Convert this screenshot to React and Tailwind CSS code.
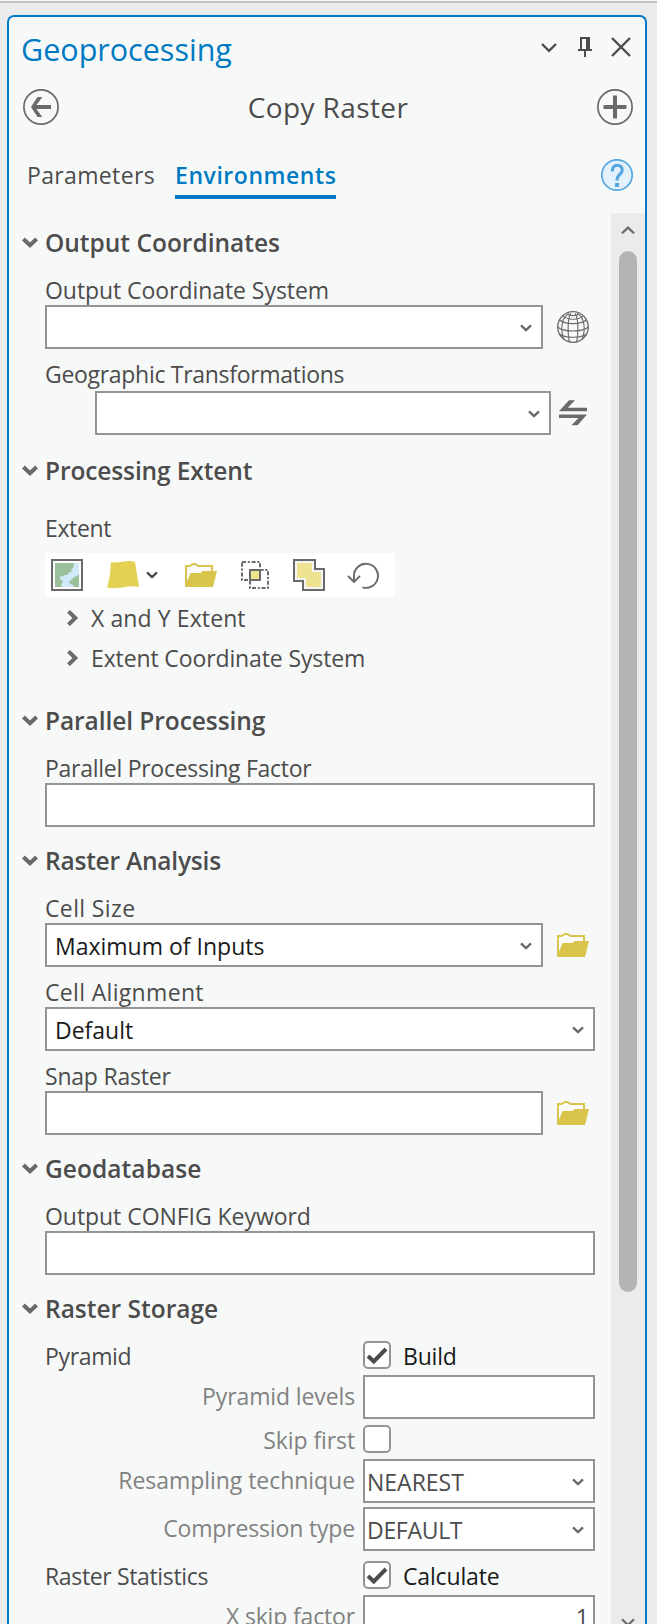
const ChevronDown = ({ className }) => (
  <svg className={className} viewBox="0 0 12 8" fill="none" stroke="currentColor" strokeWidth="2.4">
    <path d="M1 1.4 6 6.2 11 1.4" />
  </svg>
);

const FolderIcon = ({ className = "" }) => (
  <svg className={`w-8 h-8 shrink-0 ${className}`} viewBox="0 0 32 32">
    <path d="M1 27V7h3c2 0 2-2 5-2s3 2 5 2h13v6" fill="#fbfbfb" stroke="#d9c44c" strokeWidth="2" />
    <path d="M0 28 1.8 23 5.500 14H15c1.500 0 1.500-2 3.500-2H32l-4 16z" fill="#d9c44c" />
  </svg>
);

const GlobeIcon = () => (
  <svg className="w-8 h-8 shrink-0" viewBox="0 0 32 32" fill="none" stroke="#6a6a6a" strokeWidth="1.1">
    <circle cx="16" cy="16" r="15.3" strokeWidth="1.3" />
    <path d="M14 2.500C10.500 6 10.500 23 12.500 31M18 2.500C21.500 6 21.500 23 19.500 31M12 2.500C3.500 7 3.500 20 7 28.500M20 2.500C28.500 7 28.500 20 25 28.500" />
    <path d="M10 3c2.500 2.200 9.500 2.200 12 0M6 5c4 4.300 16 4.300 20 0M2.800 9c5 4.800 21.400 4.800 26.400 0M.8 16c5 5.300 25.400 5.300 30.400 0M2.500 23c5 4.300 22 4.300 27 0" />
  </svg>
);

const SwapIcon = () => (
  <svg className="w-7 h-7 shrink-0" viewBox="0 0 28 28" fill="#6a6a6a">
    <path d="M0 12.300 10 1.300h6L8.800 8.800H28v3.500zM0 15.600h28L18.500 26.300h-6L19.400 19H0z" />
  </svg>
);

const MapIcon = () => (
  <svg className="w-8 h-8" viewBox="0 0 32 32">
    <path d="M1 1h30v30H1z" fill="#fbfbfb" stroke="#6a6a6a" strokeWidth="2" />
    <path d="M4 4h24v24H4z" fill="#d2e9f9" />
    <path
      d="M4 4h19l-.5 4.500-2 1.500v3l-3 .5-1 2.500H13l-1 1.500-3-.5v3.500l2.500.5v2.500L10 25.500l1 2.500H4zM28 15l-2 2-3 1-2.500 3-2.500 1.500 1 2.500 3.500 1v2H28z"
      fill="#9bc19c"
    />
  </svg>
);

const PolygonIcon = () => (
  <svg className="w-8 h-8 ml-6" viewBox="0 0 32 32">
    <path d="M4 3c6 2 16-2.500 24-.3L32 28c-9-3-20 3-32 .5C3 20 3.500 10 4 3z" fill="#e4d153" />
  </svg>
);

const IntersectIcon = () => (
  <svg className="w-8 h-8 ml-5.5" viewBox="0 0 32 32" fill="none" stroke="#6a6a6a" strokeWidth="2">
    <path d="M3 3h18v18H3z" strokeDasharray="4 1.8 2 1.8" />
    <path d="M11 11h18v18H11z" strokeDasharray="4 1.8 2 1.8" />
    <path d="M11 11h10v10H11z" fill="#efe291" />
  </svg>
);

const UnionIcon = () => (
  <svg className="w-8 h-8 ml-5.5" viewBox="0 0 32 32">
    <path d="M1 1h21v9h9v21H10v-9H1z" fill="#f4f4f4" stroke="#6a6a6a" strokeWidth="2" />
    <path d="M4 4h15v9h9v15H13v-9H4z" fill="#efe291" />
  </svg>
);

const UndoIcon = () => (
  <svg className="w-8 h-8 ml-5.5" viewBox="0 0 32 32" fill="none" stroke="#6a6a6a" strokeWidth="1.9">
    <path d="M7 22.500V17A12 12 0 1 1 15.500 28.300" />
    <path d="M1 17 7 23 13 17" />
  </svg>
);

const Section = ({ title, className = "" }) => (
  <h2 className={`flex items-center h-8 text-[24.5px] font-semibold ${className}`}>
    <svg className="w-4 h-3 mr-[7px] ml-[-23px]" viewBox="0 0 16 12" fill="none" stroke="#6a6a6a" strokeWidth="4">
      <path d="M1.400 2 8 8.300 14.600 2" />
    </svg>
    {title}
  </h2>
);

const Label = ({ children, className = "" }) => (
  <div className={`h-8 leading-[35px] ${className}`}>{children}</div>
);

const Box = ({ value, select, className = "" }) => (
  <div className={`flex items-center justify-between h-11 shrink-0 border-2 border-[#949494] bg-white pr-[9px] ${className}`}>
    <span className="h-8 leading-[34px]">{value}</span>
    {select && <ChevronDown className="w-3 h-2 mt-0.5 text-[#6a6a6a]" />}
  </div>
);

const SubGroup = ({ label, className }) => (
  <div className="flex items-center h-8">
    <svg className="w-3 h-4 ml-[22px] mr-3" viewBox="0 0 12 16" fill="none" stroke="#6a6a6a" strokeWidth="4">
      <path d="M1.500 1.400 8.300 8 1.500 14.600" />
    </svg>
    <span className={`leading-8 ${className}`}>{label}</span>
  </div>
);

const Checkbox = ({ checked }) => (
  <div className="w-7 h-7 shrink-0 border-2 border-[#949494] rounded-[5px] bg-white">
    {checked && (
      <svg className="w-6 h-6" viewBox="0 0 24 24" fill="none" stroke="#4c4c4c" strokeWidth="4">
        <path d="M3 13 8.800 18.500 21 6" />
      </svg>
    )}
  </div>
);

const SubLabel = ({ children, className = "" }) => (
  <span className={`w-[310px] h-8 mr-2 text-right text-[#828282] leading-[30px] ${className}`}>{children}</span>
);

const Header = () => (
  <>
    <div className="flex items-center justify-between h-10 mt-3 pl-3 pr-3.5">
      <h1 className="text-[30.5px] leading-[41px] text-[#007ac2]">Geoprocessing</h1>
      <div className="flex items-center mb-1 text-[#4c4c4c]">
        <svg className="w-4 h-3" viewBox="0 0 16 12" fill="none" stroke="currentColor" strokeWidth="2.4">
          <path d="M1 3 8 9.800 15 3" />
        </svg>
        <svg className="w-3.5 h-5 ml-[21px]" viewBox="0 0 14 20" fill="currentColor">
          <path d="M2 0h10v12h2v2H8v6H6v-6H0v-2h2zM4 2v10h4V2z" fillRule="evenodd" />
        </svg>
        <svg className="w-5 h-5 ml-[19px]" viewBox="0 0 20 20" fill="none" stroke="currentColor" strokeWidth="2.4">
          <path d="M1 1 19 19M19 1 1 19" />
        </svg>
      </div>
    </div>

    <div className="flex items-center justify-between h-10 mt-[18px] pl-3.5 pr-3">
      <svg className="w-9 h-9" viewBox="0 0 36 36" fill="none" stroke="#6a6a6a">
        <circle cx="18" cy="18" r="17.1" strokeWidth="1.7" />
        <path d="M10 18h18" strokeWidth="4" />
        <path d="M14.500 8h4.800l-7.300 10 7.300 10h-4.800L8 18z" fill="#6a6a6a" stroke="none" />
      </svg>
      <span className="leading-10 text-[28px] tracking-[0.4px]">Copy Raster</span>
      <svg className="w-9 h-9" viewBox="0 0 36 36" fill="none" stroke="#6a6a6a">
        <circle cx="18" cy="18" r="17.1" strokeWidth="1.7" />
        <path d="M6.500 18h23M18 6.500v23" strokeWidth="4" />
      </svg>
    </div>

    <div className="flex h-10 mt-8 pl-[18px] pr-3">
      <span className="w-[148px] leading-8 tracking-[0.35px]">Parameters</span>
      <span className="w-[161px] leading-8 font-semibold tracking-[0.55px] text-[#007ac2] border-b-4 border-[#007ac2]">
        Environments
      </span>
      <svg className="w-8 h-8 ml-auto" viewBox="0 0 32 32" fill="none" stroke="#53a5de">
        <circle cx="16" cy="16" r="15.2" fill="#e3f1fc" strokeWidth="1.7" />
        <path d="M11.300 12.500C11 4 21.500 5 21.300 11c-.1 4.500-5.300 4-5.300 10.500" strokeWidth="3" />
        <path d="M14 24h4v4h-4z" fill="#53a5de" stroke="none" />
      </svg>
    </div>
  </>
);

const ScrollBar = () => (
  <div className="flex flex-col items-center w-[34px] shrink-0 bg-[#ebebeb]">
    <svg className="w-3.5 h-2 mt-[13px] shrink-0" viewBox="0 0 14 8" fill="none" stroke="#6a6a6a" strokeWidth="2.2">
      <path d="M1 7.300 7 1.600 13 7.300" />
    </svg>
    <div className="w-[18px] h-[1041px] mt-[17px] shrink-0 rounded-full bg-[#b4b4b4]" />
    <svg className="w-3.5 h-2 mt-[326px] shrink-0" viewBox="0 0 14 8" fill="none" stroke="#6a6a6a" strokeWidth="2.2">
      <path d="M1 1.300 7 7 13 1.300" />
    </svg>
  </div>
);

export default function App() {
  return (
    <div className="flex flex-col w-[657px] h-[1624px] overflow-hidden bg-[#ebebeb] font-['Open_Sans',sans-serif] text-[23px] text-[#4c4c4c] whitespace-nowrap">
      <div className="h-[3px] shrink-0 border-t border-[#f7f9f8] bg-[#c0c4c8]" />
      <div className="flex flex-col w-[640px] h-[1620px] shrink-0 mt-3 ml-[7px] border-2 border-b-0 border-[#007ac2] rounded-t-[7px] bg-[#f7f9f8]">
        <Header />

        <div className="flex justify-between h-[1411px] mt-3.5">
          <div className="w-[550px] ml-9 pt-3.5">
            <Section title="Output Coordinates" />
            <Label className="mt-3.5 tracking-[-0.06px]">Output Coordinate System</Label>
            <div className="flex items-center">
              <Box select className="w-[498px] mr-3.5" />
              <GlobeIcon />
            </div>
            <Label className="mt-2 mb-0.5 tracking-[-0.3px]">Geographic Transformations</Label>
            <div className="flex items-center">
              <Box select className="w-[456px] ml-[50px] mr-2" />
              <SwapIcon />
            </div>

            <Section title="Processing Extent" className="mt-5 tracking-[-0.12px]" />
            <Label className="mt-6 mb-2.5 tracking-[-0.35px]">Extent</Label>
            <div className="flex items-center w-[350px] h-11 pl-1.5 bg-white">
              <MapIcon />
              <PolygonIcon />
              <ChevronDown className="w-3 h-2 ml-[7px]" />
              <FolderIcon className="ml-[27px]" />
              <IntersectIcon />
              <UnionIcon />
              <UndoIcon />
            </div>
            <div className="flex flex-col gap-2 mt-[5px]">
              <SubGroup label="X and Y Extent" className="tracking-[0.1px]" />
              <SubGroup label="Extent Coordinate System" className="tracking-[-0.12px]" />
            </div>

            <Section title="Parallel Processing" className="mt-[31px] tracking-[-0.08px]" />
            <Label className="mt-3.5 tracking-[-0.27px]">Parallel Processing Factor</Label>
            <Box />

            <Section title="Raster Analysis" className="mt-[18px] tracking-[-0.22px]" />
            <Label className="mt-3.5 tracking-[0.37px]">Cell Size</Label>
            <div className="flex items-center">
              <Box select value="Maximum of Inputs" className="w-[498px] mr-3.5 pl-2 text-[#1a1a1a]" />
              <FolderIcon />
            </div>
            <Label className="mt-2 tracking-[0.33px]">Cell Alignment</Label>
            <Box select value="Default" className="pl-2 text-[#1a1a1a]" />
            <Label className="mt-2 tracking-[-0.22px]">Snap Raster</Label>
            <div className="flex items-center">
              <Box className="w-[498px] mr-3.5" />
              <FolderIcon />
            </div>

            <Section title="Geodatabase" className="mt-[18px] tracking-[0.06px]" />
            <Label className="mt-3.5 tracking-[-0.05px]">Output CONFIG Keyword</Label>
            <Box />

            <Section title="Raster Storage" className="mt-[18px]" />
            <div className="flex h-7 mt-4">
              <span className="w-[318px] leading-8 -mt-px tracking-[-0.35px]">Pyramid</span>
              <Checkbox checked />
              <span className="ml-3 leading-8 -mt-px tracking-[-0.2px] text-[#1a1a1a]">Build</span>
            </div>
            <div className="flex items-center mt-1.5">
              <SubLabel className="tracking-[-0.12px]">Pyramid levels</SubLabel>
              <Box className="w-[232px]" />
            </div>
            <div className="flex h-7 mt-1.5 mb-1.5">
              <SubLabel className="tracking-[-0.1px]">Skip first</SubLabel>
              <Checkbox />
            </div>
            <div className="flex items-center">
              <SubLabel className="tracking-[-0.05px]">Resampling technique</SubLabel>
              <Box select value="NEAREST" className="w-[232px] pl-0.5" />
            </div>
            <div className="flex items-center mt-1">
              <SubLabel className="tracking-[-0.16px]">Compression type</SubLabel>
              <Box select value="DEFAULT" className="w-[232px] pl-0.5 tracking-[-0.3px]" />
            </div>
            <div className="flex h-7 mt-2.5">
              <span className="w-[318px] leading-8 -mt-px tracking-[-0.35px]">Raster Statistics</span>
              <Checkbox checked />
              <span className="ml-3 leading-8 -mt-px tracking-[-0.15px] text-[#1a1a1a]">Calculate</span>
            </div>
            <div className="flex items-center mt-1.5">
              <SubLabel className="tracking-[-0.16px]">X skip factor</SubLabel>
              <div className="w-[232px] h-11 pr-1 border-2 border-[#949494] bg-white text-right leading-10">1</div>
            </div>
          </div>
          <ScrollBar />
        </div>
      </div>
    </div>
  );
}
